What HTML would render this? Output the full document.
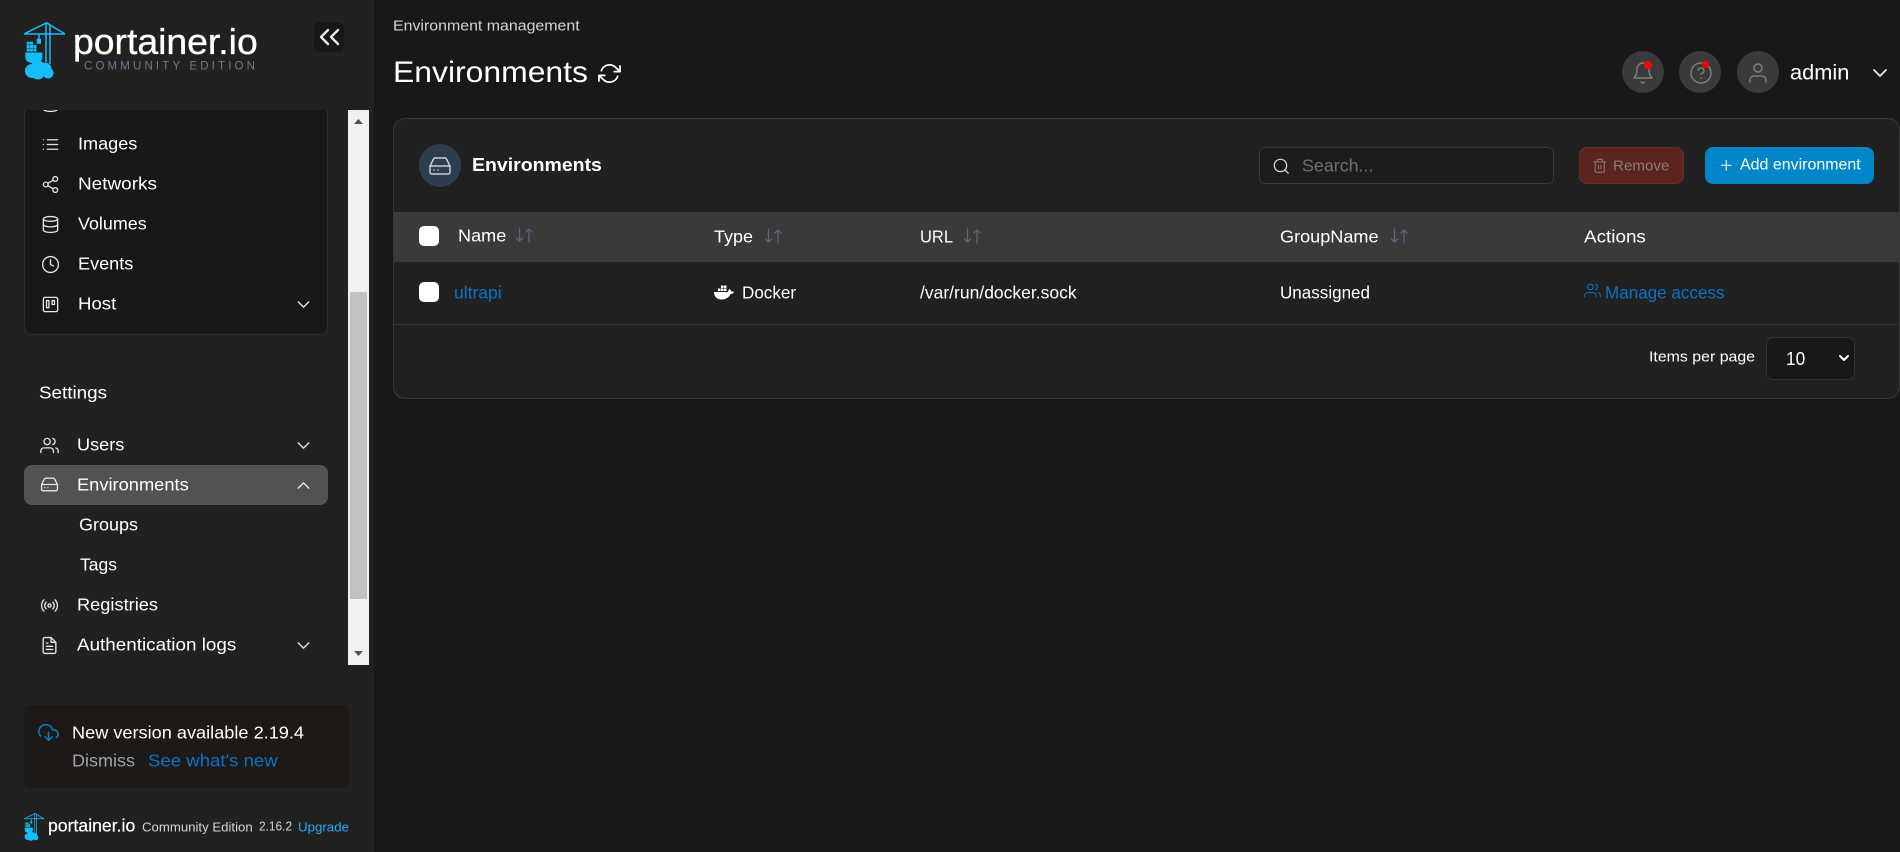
<!DOCTYPE html>
<html lang="en"><head><meta charset="utf-8"><title>Environments</title>
<style>
*{box-sizing:border-box}
html,body{margin:0;padding:0;width:1900px;height:852px;overflow:hidden;background:#181818}
body{font-family:"Liberation Sans",sans-serif;color:#fff;position:relative}
.t{position:absolute;white-space:nowrap;line-height:1;transform:translateY(-50%) scaleX(var(--s,1));transform-origin:left center;font-size:17.5px;color:#fff}
.b{position:absolute}
.i{position:absolute;fill:none;stroke:currentColor;stroke-width:1.7;stroke-linecap:round;stroke-linejoin:round;color:#e4e4e4}
.c{position:absolute;width:21px;height:21px;left:292.5px;fill:none;stroke:#e4e4e4;stroke-width:1.6;stroke-linecap:round;stroke-linejoin:round}
.cb{position:absolute;left:419px;width:20px;height:20px;background:#fff;border-radius:5px}
.sort{position:absolute;color:#5b6478;width:20px;height:18px;fill:none;stroke:currentColor;stroke-width:1.3;stroke-linecap:round;stroke-linejoin:round}
</style></head><body>
<svg width="0" height="0" style="position:absolute">
<symbol id="list" viewBox="0 0 24 24"><path d="M8 6h13M8 12h13M8 18h13M3 6h.01M3 12h.01M3 18h.01"/></symbol>
<symbol id="share" viewBox="0 0 24 24"><circle cx="18" cy="5" r="3"/><circle cx="6" cy="12" r="3"/><circle cx="18" cy="19" r="3"/><path d="M8.59 13.51l6.83 3.98M15.41 6.51l-6.82 3.98"/></symbol>
<symbol id="db" viewBox="0 0 24 24"><ellipse cx="12" cy="5" rx="9" ry="3"/><path d="M21 12c0 1.66-4 3-9 3s-9-1.34-9-3"/><path d="M3 5v14c0 1.66 4 3 9 3s9-1.34 9-3V5"/></symbol>
<symbol id="clock" viewBox="0 0 24 24"><circle cx="12" cy="12" r="10"/><path d="M12 6v6l4 2"/></symbol>
<symbol id="trello" viewBox="0 0 24 24"><rect x="3" y="3" width="18" height="18" rx="2"/><rect x="7" y="7" width="3" height="9"/><rect x="14" y="7" width="3" height="5"/></symbol>
<symbol id="users" viewBox="0 0 24 24"><path d="M17 21v-2a4 4 0 0 0-4-4H5a4 4 0 0 0-4 4v2"/><circle cx="9" cy="7" r="4"/><path d="M23 21v-2a4 4 0 0 0-3-3.87M16 3.13a4 4 0 0 1 0 7.75"/></symbol>
<symbol id="hd" viewBox="0 0 24 24"><path d="M22 12H2M5.45 5.11L2 12v6a2 2 0 0 0 2 2h16a2 2 0 0 0 2-2v-6l-3.45-6.89A2 2 0 0 0 16.76 4H7.24a2 2 0 0 0-1.79 1.11zM6 16h.01M10 16h.01"/></symbol>
<symbol id="radio" viewBox="0 0 24 24"><circle cx="12" cy="12" r="2"/><path d="M16.24 7.76a6 6 0 0 1 0 8.49m-8.48-.01a6 6 0 0 1 0-8.49m11.31-2.82a10 10 0 0 1 0 14.14m-14.14 0a10 10 0 0 1 0-14.14"/></symbol>
<symbol id="file" viewBox="0 0 24 24"><path d="M14 2H6a2 2 0 0 0-2 2v16a2 2 0 0 0 2 2h12a2 2 0 0 0 2-2V8z"/><path d="M14 2v6h6M16 13H8M16 17H8M10 9H8"/></symbol>
<symbol id="chev" viewBox="0 0 24 24"><path d="M6 9l6 6 6-6"/></symbol>
<symbol id="logo" viewBox="0 0 41 58">
<g fill="none" stroke="#13bef9" stroke-width="1.5"><path d="M0 12L22.600 .8 41 12H0M22 1V40M26 3V42M15 12v5"/></g>
<g fill="#13bef9"><rect x="12.700" y="16.700" width="4.300" height="5"/><rect x="2.700" y="19.700" width="3" height="3"/><rect x="6.100" y="19.700" width="3" height="3"/><rect x="2.700" y="23.100" width="3" height="3"/><rect x="6.100" y="23.100" width="3" height="3"/><rect x="9.500" y="23.100" width="3" height="3"/><rect x="2.700" y="26.500" width="3" height="3"/><rect x="6.100" y="26.500" width="3" height="3"/><rect x="9.500" y="26.500" width="3" height="3"/>
<path d="M1.300 30.500H18.300V36C18.300 39 14 41 9 41 4 41 1.300 38.500 1.300 35Z"/>
<circle cx="8" cy="49" r="7"/><circle cx="14" cy="46" r="7.500"/><circle cx="21" cy="47" r="6.500"/><circle cx="14" cy="51" r="6.500"/><circle cx="24" cy="51" r="5.500"/></g>
</symbol>
<symbol id="sort" viewBox="0 0 20 18"><path d="M5.500 2v13M2.500 12l3 3 3-3M15 16V3M12 6l3-3 3 3"/></symbol>
</svg>

<!-- sidebar -->
<div class="b" style="left:0;top:0;width:374px;height:852px;background:#212121"></div>
<svg class="b" style="left:24px;top:22px" width="41" height="58"><use href="#logo"/></svg>
<div class="t" style="left:73px;top:41.500px;font-size:36px;--s:1.037;-webkit-text-stroke:.35px #fff">portainer.io</div>
<div class="t" style="left:84px;top:67px;font-size:11.500px;letter-spacing:3.15px;color:#6f7a8b">COMMUNITY EDITION</div>
<div class="b" style="left:314px;top:22px;width:30px;height:30px;background:#191715;border-radius:6px"></div>
<svg class="b" style="left:314px;top:22px" width="30" height="30" fill="none" stroke="#e8e8e8" stroke-width="2.400" stroke-linecap="round" stroke-linejoin="round"><path d="M14 8l-7 7 7 7M24 8l-7 7 7 7"/></svg>

<div class="b" style="left:0;top:110px;width:374px;height:555px;overflow:hidden">
<div class="b" style="left:24px;top:-50px;width:304px;height:275px;background:#181818;border:1px dotted #3a4352;border-radius:8px"></div>
<svg class="i" style="left:41px;top:-16px" width="19" height="19"><use href="#db"/></svg>
<div class="t" style="left:78px;top:-7px;--s:1.04">Containers</div>
</div>
<div class="b" style="left:348px;top:110px;width:21px;height:555px;background:#f1f1f1"></div>
<div class="b" style="left:350px;top:292px;width:17px;height:307px;background:#c1c1c1"></div>
<svg class="b" style="left:353px;top:118px" width="11" height="7"><path d="M5.500 1L10 6H1Z" fill="#505050"/></svg>
<svg class="b" style="left:353px;top:650px" width="11" height="7"><path d="M1 1H10L5.500 6Z" fill="#505050"/></svg>

<svg class="i" style="left:40.500px;top:135px" width="19" height="19"><use href="#list"/></svg>
<div class="t" style="left:78px;top:144px;--s:1.033">Images</div>
<svg class="i" style="left:40.500px;top:175px" width="19" height="19"><use href="#share"/></svg>
<div class="t" style="left:78px;top:184px;--s:1.083">Networks</div>
<svg class="i" style="left:40.500px;top:215px" width="19" height="19"><use href="#db"/></svg>
<div class="t" style="left:78px;top:224px;--s:1.023">Volumes</div>
<svg class="i" style="left:40.500px;top:255px" width="19" height="19"><use href="#clock"/></svg>
<div class="t" style="left:78px;top:264px;--s:1.034">Events</div>
<svg class="i" style="left:40.500px;top:295px" width="19" height="19"><use href="#trello"/></svg>
<div class="t" style="left:78px;top:304px;--s:1.064">Host</div>
<svg class="c" style="top:293.500px"><use href="#chev"/></svg>

<div class="t" style="left:39px;top:393px;--s:1.076">Settings</div>
<svg class="i" style="left:39.500px;top:435.500px" width="19" height="19"><use href="#users"/></svg>
<div class="t" style="left:77px;top:445px;--s:1.035">Users</div>
<svg class="c" style="top:434.500px"><use href="#chev"/></svg>
<div class="b" style="left:24px;top:465px;width:304px;height:40px;background:#525252;border-radius:8px"></div>
<svg class="i" style="left:39.500px;top:475px" width="19" height="19"><use href="#hd"/></svg>
<div class="t" style="left:77px;top:485px;--s:1.044">Environments</div>
<svg class="c" style="top:474.500px;transform:rotate(180deg)"><use href="#chev"/></svg>
<div class="t" style="left:79px;top:525px;--s:1.028">Groups</div>
<div class="t" style="left:80px;top:565px">Tags</div>
<svg class="i" style="left:39.500px;top:596px" width="19" height="19"><use href="#radio"/></svg>
<div class="t" style="left:77px;top:605px;--s:1.041">Registries</div>
<svg class="i" style="left:39.500px;top:636px" width="19" height="19"><use href="#file"/></svg>
<div class="t" style="left:77px;top:645px;--s:1.077">Authentication logs</div>
<svg class="c" style="top:634.500px"><use href="#chev"/></svg>

<div class="b" style="left:24px;top:705px;width:325px;height:83px;background:#1c1917;border-radius:6px"></div>
<svg class="i" style="left:38px;top:722px;color:#0284c7" width="21" height="21" viewBox="0 0 24 24"><path d="M8 17l4 4 4-4M12 12v9M20.880 18.090A5 5 0 0 0 18 9h-1.260A8 8 0 1 0 3 16.290"/></svg>
<div class="t" style="left:72px;top:733px;--s:1.037">New version available 2.19.4</div>
<div class="t" style="left:72px;top:761px;color:#9ca3af;--s:1.029">Dismiss</div>
<div class="t" style="left:148px;top:761px;color:#0b72c4;--s:1.063">See what's new</div>

<svg class="b" style="left:24px;top:813px" width="20" height="28"><use href="#logo"/></svg>
<div class="t" style="left:48px;top:825.500px;font-size:17.500px;--s:1.008;-webkit-text-stroke:.2px #fff">portainer.io</div>
<div class="t" style="left:142px;top:827px;font-size:13.200px;color:#d0d5dd">Community Edition</div>
<div class="t" style="left:259px;top:827px;font-size:12.800px;--s:.93;color:#d0d5dd">2.16.2</div>
<div class="t" style="left:298px;top:827px;font-size:13.200px;--s:1.008;color:#2aa8f5">Upgrade</div>

<!-- header -->
<div class="t" style="left:393px;top:26px;font-size:15px;--s:1.061;color:#d0d5dd">Environment management</div>
<div class="t" style="left:393px;top:73px;font-size:30px;--s:1.063">Environments</div>
<svg class="i" style="left:598px;top:62px;color:#fff;stroke-width:1.800" width="23" height="23" viewBox="0 0 24 24"><path d="M23 4v6h-6M1 20v-6h6M3.510 9a9 9 0 0 1 14.850-3.360L23 10M1 14l4.640 4.360A9 9 0 0 0 20.490 15"/></svg>

<div class="b" style="left:1622px;top:51px;width:42px;height:42px;border-radius:50%;background:#3a3a3a"></div>
<svg class="i" style="left:1631px;top:60.500px;color:#7d7d7d;stroke-width:1.500" width="24" height="24" viewBox="0 0 24 24"><path d="M18 8A6 6 0 0 0 6 8c0 7-3 9-3 9h18s-3-2-3-9M13.730 21a2 2 0 0 1-3.460 0"/></svg>
<div class="b" style="left:1643.500px;top:60.500px;width:8px;height:8px;border-radius:50%;background:#f00"></div>
<div class="b" style="left:1679px;top:51px;width:42px;height:42px;border-radius:50%;background:#3a3a3a"></div>
<svg class="i" style="left:1688.500px;top:61px;color:#7d7d7d;stroke-width:1.500" width="24" height="24" viewBox="0 0 24 24"><circle cx="12" cy="12" r="10"/><path d="M9.090 9a3 3 0 0 1 5.830 1c0 2-3 3-3 3M12 17h.01"/></svg>
<div class="b" style="left:1701.500px;top:60.800px;width:7px;height:7px;border-radius:50%;background:#f00"></div>
<div class="b" style="left:1737px;top:51px;width:42px;height:42px;border-radius:50%;background:#3a3a3a"></div>
<svg class="i" style="left:1746px;top:60.500px;color:#7d7d7d;stroke-width:1.500" width="24" height="24" viewBox="0 0 24 24"><path d="M20 21v-2a4 4 0 0 0-4-4H8a4 4 0 0 0-4 4v2"/><circle cx="12" cy="7" r="4"/></svg>
<div class="t" style="left:1790px;top:73px;font-size:21px;--s:1.037">admin</div>
<svg class="i" style="left:1868px;top:60.500px;color:#eee" width="24" height="24"><use href="#chev"/></svg>

<!-- card -->
<div class="b" style="left:393px;top:118px;width:1507px;height:281px;background:#212121;border:1px solid #383838;border-radius:12px"></div>
<div class="b" style="left:419px;top:144px;width:42px;height:43px;border-radius:50%;background:#2f3d50"></div>
<svg class="i" style="left:428px;top:153.500px;color:#c8d0dc;stroke-width:1.500" width="24" height="24"><use href="#hd"/></svg>
<div class="t" style="left:472px;top:165px;font-size:18.500px;font-weight:700;--s:1.053">Environments</div>

<div class="b" style="left:1259px;top:147px;width:295px;height:37px;background:#1c1c1c;border:1px solid #383838;border-radius:6px"></div>
<svg class="i" style="left:1271.500px;top:157px;color:#ddd;stroke-width:1.600" width="18.500" height="18.500" viewBox="0 0 24 24"><circle cx="11" cy="11" r="8"/><path d="M21 21l-4.350-4.350"/></svg>
<div class="t" style="left:1302px;top:166px;color:#6f6f6f;--s:1.02">Search...</div>

<div class="b" style="left:1579px;top:147px;width:105px;height:37px;background:#5c241f;border:1px solid #6e2c26;border-radius:8px"></div>
<svg class="i" style="left:1591.800px;top:158px;color:#8c7c78;stroke-width:1.600" width="15.500" height="15.500" viewBox="0 0 24 24"><path d="M3 6h18M19 6v14a2 2 0 0 1-2 2H7a2 2 0 0 1-2-2V6m3 0V4a2 2 0 0 1 2-2h4a2 2 0 0 1 2 2v2M10 11v6M14 11v6"/></svg>
<div class="t" style="left:1613px;top:165.500px;font-size:15px;--s:1.01;color:#8c7c78">Remove</div>

<div class="b" style="left:1705px;top:147px;width:169px;height:37px;background:#0086c9;border-radius:8px"></div>
<svg class="i" style="left:1717.500px;top:157px;color:#fff;stroke-width:1.600" width="16.500" height="16.500" viewBox="0 0 24 24"><path d="M12 5v14M5 12h14"/></svg>
<div class="t" style="left:1740px;top:165px;font-size:15.500px;--s:1.03">Add environment</div>

<div class="b" style="left:394px;top:212px;width:1506px;height:50px;background:#3a3a3a"></div>
<div class="cb" style="top:226px"></div>
<div class="t" style="left:458px;top:236px;--s:1.034">Name</div>
<svg class="sort" style="left:514px;top:226px"><use href="#sort"/></svg>
<div class="t" style="left:714px;top:237px;--s:1.028">Type</div>
<svg class="sort" style="left:763px;top:227px"><use href="#sort"/></svg>
<div class="t" style="left:920px;top:237px;--s:.943">URL</div>
<svg class="sort" style="left:962px;top:227px"><use href="#sort"/></svg>
<div class="t" style="left:1280px;top:237px;--s:1.034">GroupName</div>
<svg class="sort" style="left:1388.500px;top:227px"><use href="#sort"/></svg>
<div class="t" style="left:1584px;top:237px;--s:1.078">Actions</div>

<div class="cb" style="top:282px"></div>
<div class="t" style="left:454px;top:293px;color:#0b72c4">ultrapi</div>
<svg class="b" style="left:713px;top:284px" width="22" height="16" viewBox="0 0 22 16"><g fill="#fff"><rect x="5" y="4.500" width="2.500" height="2.500"/><rect x="8" y="4.500" width="2.500" height="2.500"/><rect x="11" y="4.500" width="2.500" height="2.500"/><rect x="8" y="1.500" width="2.500" height="2.500"/><rect x="11" y="1.500" width="2.500" height="2.500"/><path d="M1 8h14c.5-2 1-3 1.500-3 1 .5 1.500 1.500 1.500 2.500 1.200-.3 2.500 0 3 .5-.8 1.500-2 2-3.500 2C16.500 13 13 15.500 8.500 15.500 4 15.500 1 12.500 1 8z"/></g></svg>
<div class="t" style="left:741.500px;top:293px;--s:.975">Docker</div>
<div class="t" style="left:920px;top:293px">/var/run/docker.sock</div>
<div class="t" style="left:1280px;top:293px;--s:.974">Unassigned</div>
<svg class="i" style="left:1583.500px;top:282px;color:#0b72c4;stroke-width:1.500" width="17" height="17"><use href="#users"/></svg>
<div class="t" style="left:1605px;top:293px;color:#0b72c4;--s:.975">Manage access</div>

<div class="b" style="left:394px;top:324px;width:1506px;height:1px;background:#383838"></div>
<div class="t" style="left:1649px;top:357px;font-size:15px;--s:1.06">Items per page</div>
<div class="b" style="left:1766px;top:337px;width:89px;height:43px;background:#181818;border:1px solid #333;border-radius:7px"></div>
<div class="t" style="left:1786px;top:359px;font-size:18px;--s:.96">10</div>
<svg class="i" style="left:1836px;top:350px;color:#fff;stroke-width:3" width="16" height="16"><use href="#chev"/></svg>
</body></html>
